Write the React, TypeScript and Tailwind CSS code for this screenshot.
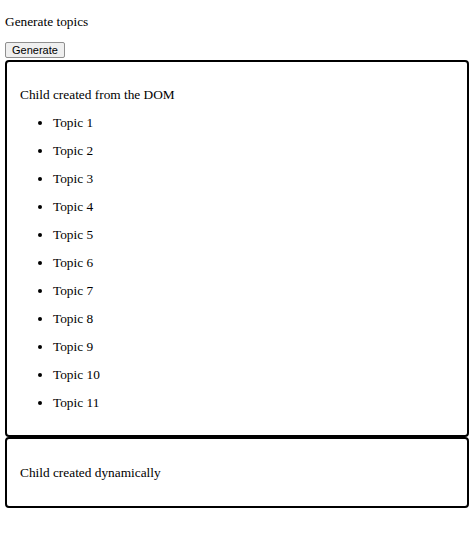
import React, { useState } from 'react';

const serif = { fontFamily: '"Liberation Serif", "Times New Roman", serif' };

export default function App() {
  const [topics] = useState<string[]>(
    Array.from({ length: 11 }, (_, i) => `Topic ${i + 1}`)
  );

  return (
    <div className="px-[5px] pb-[20px] text-[13.33px] leading-[15px] text-black bg-white" style={serif}>
      <p className="pt-[14px]">Generate topics</p>

      <button
        type="button"
        className="mt-[13px] h-[16px] px-[6px] border border-[#8f8f8f] rounded-[2px] bg-[#efefef] text-[11px] leading-[13px] text-black font-['Liberation_Sans',Arial,sans-serif]"
      >
        Generate
      </button>

      {/* 静态子节点 */}
      <div className="mt-[2px] border-2 border-black rounded-[4px] px-[13px] py-[12px]">
        <p className="my-[13px]">Child created from the DOM</p>
        <ul className="list-disc pl-[33px]">
          {topics.map((topic) => (
            <li key={topic}>
              <p className="my-[13px]">{topic}</p>
            </li>
          ))}
        </ul>
      </div>

      {/* 动态子节点 */}
      <div className="border-2 border-black rounded-[4px] px-[13px] py-[13px]">
        <p className="my-[13px]">Child created dynamically</p>
      </div>
    </div>
  );
}
